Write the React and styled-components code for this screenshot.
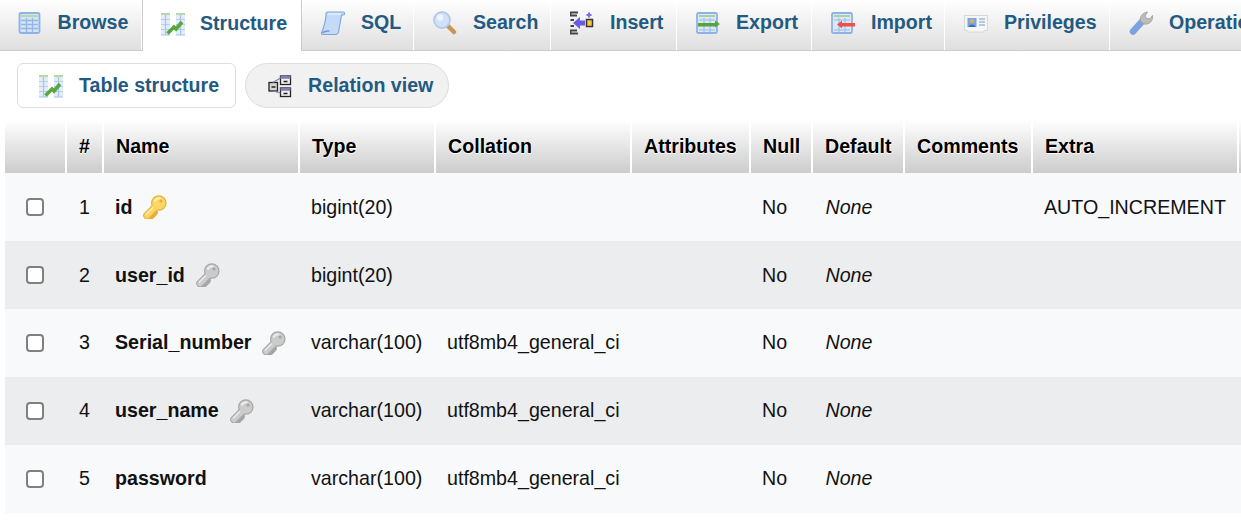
import React from 'react';
import styled, {createGlobalStyle} from 'styled-components';

const GlobalStyle = createGlobalStyle`
    html, body {
        margin: 0;
        padding: 0;
        background: #fff;
        overflow: hidden;
    }
    body {
        font-family: "Liberation Sans", Arial, sans-serif;
        font-size: 19.65px;
    }
`;

const BrowseIcon = () => (
    <svg width="24" height="24" viewBox="0 0 24 24">
        <rect x="1.500" y="2" width="20" height="20" rx="1.500" fill="#d3e3f8" stroke="#8fb2e6" strokeWidth="1.800" />
        <rect x="3" y="4" width="17" height="2" fill="#b5dba2" />
        <path d="M3 9.500h17M3 13.500h17M3 17.500h17M8.500 7v14M14.500 7v14" stroke="#94b6e6" strokeWidth="1.300" />
    </svg>
);

const StructureIcon = () => (
    <svg width="24" height="24" viewBox="0 0 24 24">
        <rect x="0" y="1" width="9" height="22" fill="#e3edf9" />
        <rect x="15" y="1" width="9" height="22" fill="#e3edf9" />
        <path d="M0 2h9M15 2h9" stroke="#b3d9a5" strokeWidth="2" />
        <path d="M0 7.500h9M0 12.500h9M0 17.500h9M15 7.500h9M15 12.500h9M15 17.500h9" stroke="#b5cdef" strokeWidth="1.200" />
        <path d="M4.500 3v20M19.500 3v20M0 23h9M15 23h9" stroke="#a8c4ec" strokeWidth="1.200" />
        <path d="M6.500 21.500 13 15l2 2 6-7" fill="none" stroke="#58a83e" strokeWidth="3.600" />
    </svg>
);

const SqlIcon = () => (
    <svg width="24" height="24" viewBox="0 0 24 24">
        <path d="M6.500 1h15.500c1.500 0 2 1 1.500 2.500l-3 .8L17.500 21c-.3 1.600-1.500 2.500-3 2.500H2c-1.500 0-2-1.300-1.200-2.500C3 17 5 8 5 3.500 5 2 5.500 1 6.500 1Z" fill="#c4daf7" stroke="#7ea6e0" strokeWidth="1.100" />
        <path d="M7 3h13" stroke="#e4effc" strokeWidth="1.500" />
        <path d="M1.500 21.800c2-1.800 4.500-2 7-1.800" fill="none" stroke="#6f9ad8" strokeWidth="1.500" />
    </svg>
);

const SearchIcon = () => (
    <svg width="24" height="24" viewBox="0 0 24 24">
        <path d="m14.500 14.500 6.500 6.500" stroke="#c79655" strokeWidth="4.500" strokeLinecap="round" />
        <circle cx="9" cy="9" r="8" fill="#cfe2f8" stroke="#b3cbe8" strokeWidth="1.800" />
        <circle cx="7" cy="6.500" r="3.200" fill="#eef5fd" />
    </svg>
);

const InsertIcon = () => (
    <svg width="24" height="24" viewBox="0 0 24 24">
        <path d="M8 1.500H0.500V4.500H7M0.500 9H4M0.500 15H4M7 19.500H0.500v3H8" fill="none" stroke="#444" strokeWidth="1.800" />
        <path d="M3 12 10 6v3.500h5v5h-5V18Z" fill="#6b5be0" />
        <rect x="16.500" y="8.500" width="6" height="7" fill="#f7c93c" stroke="#333" strokeWidth="1.500" />
        <path d="M19 1.500v5M16.500 4h5" stroke="#7b6be6" strokeWidth="2" />
    </svg>
);

const ExportIcon = () => (
    <svg width="24" height="24" viewBox="0 0 24 24">
        <rect x="1" y="2" width="20" height="20" rx="1.500" fill="#dbe8f9" stroke="#8fb2e6" strokeWidth="1.800" />
        <rect x="3" y="4" width="16" height="2" fill="#a9d39a" />
        <path d="M3 9h16M3 19h16M8 7v14M14 7v14" stroke="#9cbce6" strokeWidth="1.100" />
        <path d="M2 12h17V9.500l5 3.500-5 3.500V15.500H2Z" fill="#55a63a" />
    </svg>
);

const ImportIcon = () => (
    <svg width="24" height="24" viewBox="0 0 24 24">
        <rect x="1" y="2" width="20" height="20" rx="1.500" fill="#dbe8f9" stroke="#8fb2e6" strokeWidth="1.800" />
        <rect x="3" y="4" width="16" height="2" fill="#a9d39a" />
        <path d="M3 9h16M3 19h16M8 7v14M14 7v14" stroke="#9cbce6" strokeWidth="1.100" />
        <path d="M24 12H11V9.500L6 13.500l5 4V15.500h13Z" fill="#ee4f47" />
    </svg>
);

const PrivilegesIcon = () => (
    <svg width="24" height="24" viewBox="0 0 24 24">
        <path d="M0.500 4.500h23v15h-3l-1 1.500H4.500l-1-1.500h-3Z" fill="#f5f5f5" stroke="#d8d8d8" strokeWidth="1" />
        <rect x="3.500" y="7" width="9" height="9" fill="#6fa8e8" />
        <circle cx="8" cy="10" r="2.300" fill="#e6a860" />
        <path d="M4.500 16c.5-3.500 6.500-3.500 7 0Z" fill="#3f6cae" />
        <path d="M15 8h6M15 11h6M15 14h6" stroke="#a4bad6" strokeWidth="1.500" />
    </svg>
);

const OperationsIcon = () => (
    <svg width="24" height="24" viewBox="0 0 24 24">
        <path d="M4 20.500 14 9.500" stroke="#7ba3e2" strokeWidth="6.500" strokeLinecap="round" />
        <path d="M11.500 10.500C10.500 6 13.500 1.500 18.500 1l-2.500 4 1.500 2.500 3.500.3 2.500-3.300c.8 5.500-3.500 9.500-8.500 8.500Z" fill="#bdbdbd" stroke="#9a9a9a" strokeWidth="0.800" />
    </svg>
);

const RelationIcon = () => (
    <svg width="24" height="24" viewBox="0 0 24 24">
        <rect x="12.500" y="2" width="10" height="8.500" fill="#f1f1f1" stroke="#222" strokeWidth="1.300" />
        <rect x="12.500" y="2" width="10" height="2.800" fill="#7f7fb2" />
        <rect x="12.500" y="14" width="10" height="8.500" fill="#f1f1f1" stroke="#222" strokeWidth="1.300" />
        <rect x="12.500" y="14" width="10" height="2.800" fill="#7f7fb2" />
        <rect x="1" y="8.500" width="8.500" height="8.500" fill="#d4d4d4" stroke="#222" strokeWidth="1.300" />
        <path d="M3.500 13h4M15.500 7.500h4M15.500 19.500h4" stroke="#222" strokeWidth="1.300" />
        <path d="M5 8.500 12.500 4M5 17l7.500 2" stroke="#7f7fb2" strokeWidth="1.200" fill="none" />
    </svg>
);

const KeyIcon = ({primary}) => {
    const fill = primary ? '#fbd663' : '#cbcbcb';
    const line = primary ? '#e8ae3c' : '#a6a6a6';
    const inner = primary ? '#fff2b0' : '#ececec';
    return (
        <svg width="24" height="24" viewBox="0 0 24 24">
            <path d="M4 20.500 13 11.500M8 20.500l3-3" stroke={line} strokeWidth="7.500" strokeLinecap="round" />
            <circle cx="15.800" cy="8" r="7.800" fill={line} />
            <path d="M4 20.500 13 11.500" stroke={fill} strokeWidth="5.500" strokeLinecap="round" />
            <circle cx="15.800" cy="8" r="6.600" fill={fill} />
            <path d="M11.500 6.500c1-2 3.500-3.500 6-3" stroke={inner} strokeWidth="2" fill="none" />
            <path d="M3 19.500 10 12.500" stroke={inner} strokeWidth="1.300" fill="none" />
            <circle cx="18" cy="6" r="1.600" fill={line} />
        </svg>
    );
};

const tabs = [
    {label: 'Browse', width: 142, icon: <BrowseIcon />},
    {label: 'Structure', width: 160, icon: <StructureIcon />, active: true},
    {label: 'SQL', width: 112, icon: <SqlIcon />},
    {label: 'Search', width: 137, icon: <SearchIcon />},
    {label: 'Insert', width: 126, icon: <InsertIcon />},
    {label: 'Export', width: 135, icon: <ExportIcon />},
    {label: 'Import', width: 133, icon: <ImportIcon />},
    {label: 'Privileges', width: 165, icon: <PrivilegesIcon />},
    {label: 'Operations', width: 170, icon: <OperationsIcon />},
];

const columns = [
    {label: '', width: 62},
    {label: '#', width: 37, center: true},
    {label: 'Name', width: 196},
    {label: 'Type', width: 136},
    {label: 'Collation', width: 196},
    {label: 'Attributes', width: 119},
    {label: 'Null', width: 62},
    {label: 'Default', width: 92},
    {label: 'Comments', width: 128},
    {label: 'Extra', width: 206},
    {label: '', width: 40},
];

const fields = [
    {id: 1, name: 'id', primary: true, type: 'bigint(20)', collation: '', extra: 'AUTO_INCREMENT'},
    {id: 2, name: 'user_id', keyed: true, type: 'bigint(20)', collation: '', extra: ''},
    {id: 3, name: 'Serial_number', keyed: true, type: 'varchar(100)', collation: 'utf8mb4_general_ci', extra: ''},
    {id: 4, name: 'user_name', keyed: true, type: 'varchar(100)', collation: 'utf8mb4_general_ci', extra: ''},
    {id: 5, name: 'password', type: 'varchar(100)', collation: 'utf8mb4_general_ci', extra: ''},
];

const App = () => {
    return (
        <Wrapper>
            <GlobalStyle />
            <TabBar>
                {tabs.map(tab => (
                    <Tab key={tab.label} $active={tab.active} $width={tab.width}>
                        {tab.icon}
                        <span>{tab.label}</span>
                    </Tab>
                ))}
            </TabBar>

            <SubNav>
                <SubLink $active>
                    <StructureIcon />
                    <span>Table structure</span>
                </SubLink>
                <SubLink>
                    <RelationIcon />
                    <span>Relation view</span>
                </SubLink>
            </SubNav>

            <FieldTable>
                <colgroup>
                    {columns.map((col, index) => <col key={index} width={col.width} />)}
                </colgroup>
                <thead>
                    <tr>
                        {columns.map((col, index) => (
                            <HeadCell key={index} $center={col.center}>{col.label}</HeadCell>
                        ))}
                    </tr>
                </thead>
                <tbody>
                    {fields.map(field => (
                        <Row key={field.id}>
                            <CheckCell><Check type="checkbox" /></CheckCell>
                            <NumberCell>{field.id}</NumberCell>
                            <Cell>
                                <FieldName>
                                    <strong>{field.name}</strong>
                                    {(field.primary || field.keyed) && <KeyIcon primary={field.primary} />}
                                </FieldName>
                            </Cell>
                            <Cell>{field.type}</Cell>
                            <Cell>{field.collation}</Cell>
                            <Cell />
                            <Cell>No</Cell>
                            <Cell><DefaultValue>None</DefaultValue></Cell>
                            <Cell />
                            <Cell>{field.extra}</Cell>
                            <Cell />
                        </Row>
                    ))}
                </tbody>
            </FieldTable>
        </Wrapper>
    );
};

const Wrapper = styled.div`
    width: 1241px;
    height: 525px;
    overflow: hidden;
    background: #fff;
    color: #111;
`;

const TabBar = styled.nav`
    display: flex;
    width: max-content;
    height: 51px;
    border-bottom: 1px solid #ccc;
    box-sizing: border-box;
`;

const Tab = styled.a`
    display: flex;
    align-items: center;
    gap: ${props => props.$active ? '15px' : '16px'};
    box-sizing: border-box;
    width: ${props => props.$width}px;
    height: ${props => props.$active ? '51px' : '50px'};
    padding-left: ${props => props.$active ? '18px' : '19px'};
    font-size: 19.6px;
    font-weight: bold;
    color: #235a81;
    background: ${props => props.$active ? '#fff' : 'linear-gradient(#fff, #dfdfdf)'};
    border-right: 1px solid ${props => props.$active ? '#ccc' : '#fff'};
    border-left: ${props => props.$active ? '1px solid #ccc' : '0'};
    flex: none;

    &:first-child {
        padding-left: 17.5px;
    }

    & > svg {
        flex: none;
        margin-top: -4px;
    }

    & > span {
        margin-top: -5px;
    }
`;

const SubNav = styled.div`
    display: flex;
    gap: 9px;
    padding: 12px 0 0 17px;
`;

const SubLink = styled.a`
    display: flex;
    align-items: center;
    gap: 16px;
    height: 45px;
    box-sizing: border-box;
    padding: ${props => props.$active ? '0 16px 0 21px' : '0 15px 0 22px'};
    font-size: 19.6px;
    font-weight: bold;
    color: #235a81;
    background: ${props => props.$active ? '#fff' : '#f1f1f1'};
    border: 1px solid #ddd;
    border-radius: ${props => props.$active ? '6px' : '23px'};

    & > svg {
        flex: none;
    }
`;

const FieldTable = styled.table`
    width: 1274px;
    margin: 12.3px 0 0 5px;
    table-layout: fixed;
    border-collapse: separate;
    border-spacing: 0;
`;

const HeadCell = styled.th`
    height: 53px;
    box-sizing: border-box;
    padding: 0 0 0 ${props => props.$center ? '0' : '12px'};
    text-align: ${props => props.$center ? 'center' : 'left'};
    font-weight: bold;
    color: #000;
    text-shadow: 1px 0 #fff, 0 1px #fff;
    white-space: nowrap;
    vertical-align: middle;
    background: linear-gradient(#fff, #ccc);
    border-right: 2px solid #fff;
`;

const Row = styled.tr`
    height: 67.85px;
    background: #f7f9fb;

    &:nth-child(even) {
        background: #ecedef;
    }
`;

const Cell = styled.td`
    box-sizing: border-box;
    padding: 0 0 0 11px;
    white-space: nowrap;
    color: #111;
`;

const CheckCell = styled.td`
    padding: 0 0 0 21px;
    line-height: 0;
`;

const NumberCell = styled.td`
    padding: 0 2px 0 0;
    text-align: center;
`;

const FieldName = styled.div`
    display: flex;
    align-items: center;
    gap: 11px;
`;

const DefaultValue = styled.em`
    margin-left: 1.5px;
`;

const Check = styled.input`
    appearance: none;
    display: block;
    width: 18px;
    height: 18px;
    margin: 0;
    background: #fff;
    border: 2px solid #808080;
    border-radius: 4px;
    box-sizing: border-box;
`;

export default App;
